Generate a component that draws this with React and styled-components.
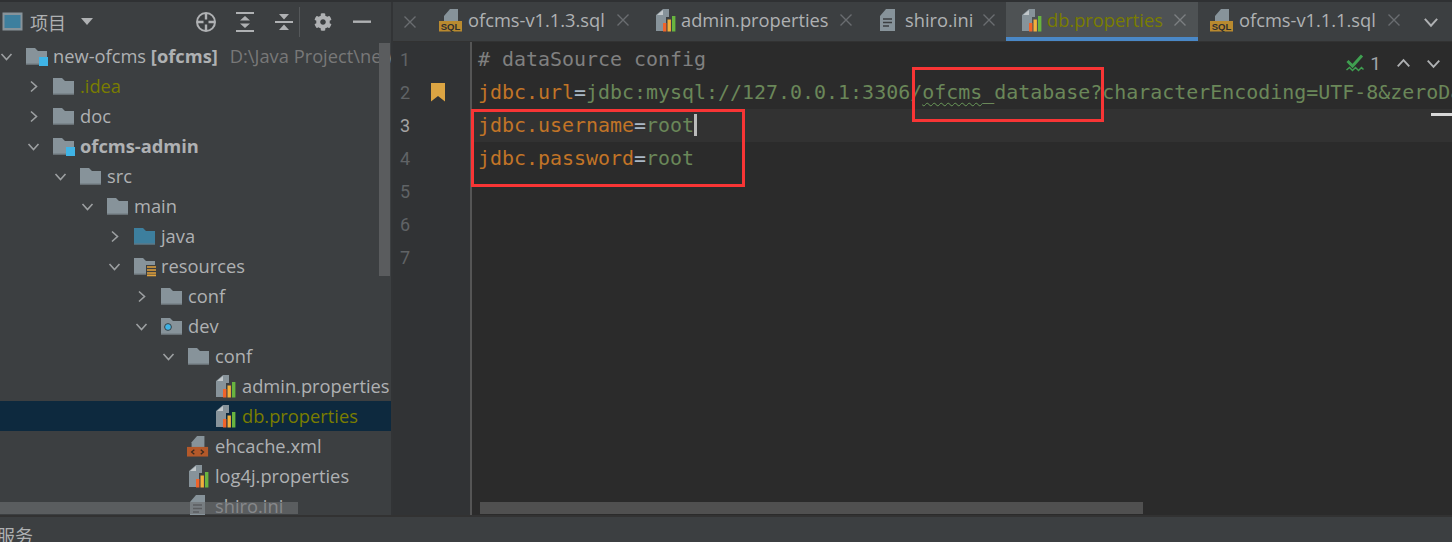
import React from "react";
import styled, { createGlobalStyle } from "styled-components";
import { FaCog } from "react-icons/fa";

const GlobalStyle = createGlobalStyle`
  html, body {
    margin: 0;
    padding: 0;
    background: #3c3f41;
    overflow: hidden;
  }
`;

const UI_FONT = `"Open Sans", "Noto Sans CJK SC", sans-serif`;
const CODE_FONT = `"DejaVu Sans Mono", monospace`;

const Page = styled.div`
  width: 1452px;
  height: 542px;
  display: flex;
  flex-direction: column;
  overflow: hidden;
  background: #3c3f41;
  font-family: ${UI_FONT};
  border-top: 2px solid #2f3133;
  box-sizing: border-box;
`;

const Workspace = styled.div`
  flex: 1;
  display: flex;
  min-height: 0;
`;

/* project panel */
const Sidebar = styled.aside`
  position: relative;
  width: 391px;
  flex: none;
  display: flex;
  flex-direction: column;
  overflow: hidden;
`;

const PanelHeader = styled.div`
  height: 39px;
  flex: none;
  display: flex;
  align-items: center;
  padding-left: 2px;
  color: #afb1b3;
`;

const PanelTitle = styled.span`
  font-size: 18px;
  margin-left: 7px;
  color: #afb1b3;
`;

const Dropdown = styled.span`
  width: 0;
  height: 0;
  margin-left: 15px;
  border-left: 6.5px solid transparent;
  border-right: 6.5px solid transparent;
  border-top: 7px solid #afb1b3;
`;

const PanelActions = styled.div`
  margin-left: auto;
  margin-right: 10px;
  display: flex;
  align-items: center;
`;

const ActionSlot = styled.span`
  width: 39px;
  height: 24px;
  display: flex;
  align-items: center;
  justify-content: center;
`;

const ActionDivider = styled.span`
  width: 1px;
  height: 30px;
  background: #55585a;
  margin: 0 3px 0 -4px;
`;

const Tree = styled.div`
  display: flex;
  flex-direction: column;
`;

const Row = styled.div`
  height: 30px;
  flex: none;
  display: flex;
  align-items: center;
  white-space: nowrap;
  padding-left: ${(p) => p.$depth * 27}px;
  background: ${(p) => (p.$selected ? "#0d293e" : "transparent")};
`;

const Toggle = styled.span`
  width: 13px;
  flex: none;
  margin-right: 12px;
  display: flex;
  align-items: center;
  justify-content: center;
`;

const NodeIcon = styled.span`
  width: 22px;
  height: 24px;
  flex: none;
  margin-right: 6px;
  display: flex;
  align-items: center;
  justify-content: center;
`;

const NodeLabel = styled.span`
  font-size: 18.3px;
  margin-bottom: 2px;
  font-weight: ${(p) => (p.$bold ? 700 : 400)};
  color: ${(p) => p.$color || "#afb1b3"};
`;

const NodeHint = styled.span`
  font-size: 18.3px;
  margin-bottom: 2px;
  color: #787878;
  margin-left: 12px;
`;

const TreeScrollV = styled.div`
  position: absolute;
  left: 379px;
  top: 41px;
  width: 11px;
  height: 233px;
  background: #5a5c5e;
`;

const TreeScrollH = styled.div`
  position: absolute;
  left: 0;
  bottom: 1px;
  width: 298px;
  height: 12px;
  background: rgba(110, 112, 114, 0.62);
`;

const PanelSplit = styled.div`
  width: 2px;
  flex: none;
  background: #323436;
`;

/* editor */
const EditorPane = styled.main`
  position: relative;
  flex: 1;
  min-width: 0;
  display: flex;
  flex-direction: column;
`;

const TabBar = styled.div`
  height: 39px;
  flex: none;
  display: flex;
  background: #3c3f41;
  border-bottom: 1px solid #323232;
  box-sizing: content-box;
`;

const TabStub = styled.div`
  width: 33px;
  flex: none;
  display: flex;
  align-items: center;
  justify-content: center;
  padding-right: 1px;
  margin-right: 9px;
`;

const Tab = styled.div`
  width: ${(p) => p.$width}px;
  flex: none;
  box-sizing: border-box;
  display: flex;
  align-items: center;
  padding-left: ${(p) => p.$pad}px;
  background: ${(p) => (p.$active ? "#4e5254" : "transparent")};
  border-bottom: 4px solid ${(p) => (p.$active ? "#4a88c7" : "transparent")};
`;

const TabLabel = styled.span`
  font-size: 18.3px;
  white-space: nowrap;
  margin-left: ${(p) => p.$gap}px;
  color: ${(p) => (p.$active ? "#7a7d00" : "#afb1b3")};
`;

const TabClose = styled.span`
  margin-left: auto;
  margin-right: ${(p) => p.$gap}px;
  display: flex;
`;

const TabMenu = styled.div`
  margin-left: 17px;
  display: flex;
  align-items: center;
`;

const EditorBody = styled.div`
  flex: 1;
  min-height: 0;
  display: flex;
  background: #2b2b2b;
`;

const Gutter = styled.div`
  width: 77px;
  flex: none;
  padding-top: 1px;
  background: #313335;
  border-right: 2px solid #555555;
`;

const GutterLine = styled.div`
  height: 33px;
  display: flex;
  align-items: center;
  justify-content: space-between;
  padding: 0 25px 0 7px;
  font-family: "Roboto", sans-serif;
  font-size: 18px;
  color: ${(p) => (p.$current ? "#a4a3a3" : "#606366")};
`;

const CodeArea = styled.div`
  flex: 1;
  min-width: 0;
  padding-top: 1px;
  overflow: hidden;
`;

const CodeLine = styled.div`
  height: 33px;
  box-sizing: border-box;
  padding-left: 6px;
  line-height: 33px;
  font-family: ${CODE_FONT};
  font-size: 19.95px;
  white-space: pre;
  background: ${(p) => (p.$current ? "#323232" : "transparent")};
`;

const Key = styled.span`
  color: #c27427;
`;

const Equals = styled.span`
  color: #a9b7c6;
`;

const Value = styled.span`
  color: #6a8759;
`;

const Typo = styled.span`
  text-decoration: underline wavy #6a9a59 1px;
  text-underline-offset: 3px;
`;

const Comment = styled.span`
  color: #808080;
`;

const Caret = styled.span`
  display: inline-block;
  width: 3px;
  height: 22px;
  margin-right: -3px;
  vertical-align: -4px;
  background: #bbbbbb;
`;

const Inspection = styled.div`
  position: absolute;
  top: 50px;
  right: 11px;
  display: flex;
  align-items: center;
  color: #a9b7c6;
  font-size: 19px;
`;

const InspectionCount = styled.span`
  margin: 0 15px 0 6px;
  font-family: "Roboto", sans-serif;
  color: #a0a4a8;
`;

const InspectionNext = styled.span`
  margin-left: 15px;
  display: flex;
`;

const StripeMark = styled.div`
  position: absolute;
  right: 0;
  top: 111px;
  width: 21px;
  height: 3px;
  background: #d8d8d8;
`;

const EditorScroll = styled.div`
  position: absolute;
  left: 87px;
  bottom: 1px;
  width: 663px;
  height: 12px;
  background: #505050;
`;

/* red marks drawn on top of the screenshot */
const Highlight = styled.div`
  position: absolute;
  box-sizing: border-box;
  border: 3px solid #f83535;
  left: ${(p) => p.$x}px;
  top: ${(p) => p.$y}px;
  width: ${(p) => p.$w}px;
  height: ${(p) => p.$h}px;
`;

const BottomBar = styled.footer`
  height: 27px;
  flex: none;
  box-sizing: border-box;
  border-top: 2px solid #323232;
  background: #3c3f41;
  overflow: hidden;
  padding-top: 7px;
`;

const BottomLabel = styled.span`
  display: block;
  margin-left: -3px;
  font-size: 18px;
  line-height: 24px;
  color: #afb1b3;
`;

/* icons */
const GREY = "#87939a";

const Chevron = ({ dir = "right", size = 13, color = "#9da0a2" }) => {
  const paths = {
    right: "M4 1.5 L9.5 6.5 L4 11.5",
    down: "M1.5 4 L6.5 9.5 L11.5 4",
    up: "M1.5 9 L6.5 3.5 L11.5 9",
  };
  return (
    <svg width={size} height={size} viewBox="0 0 13 13">
      <path d={paths[dir]} fill="none" stroke={color} strokeWidth="1.6" />
    </svg>
  );
};

const Folder = ({ color = GREY, children }) => (
  <svg width="22" height="20" viewBox="0 0 22 20" style={{ overflow: "visible" }}>
    <path d="M1 2 H10 L13 5 H22 V18.5 H1 Z" fill={color} />
    <path d="M1 17.5 H22 V18.5 H1 Z" fill="#6d777d" />
    {children}
  </svg>
);

const ModuleBadge = () => <rect x="14" y="11" width="9" height="9" fill="#3fb4e6" />;

const ResourceBadge = () => (
  <g>
    <rect x="13" y="9" width="10" height="11" fill="#3c3f41" />
    <path d="M14 11 H23 M14 14 H23 M14 17 H23 M14 19.4 H23" stroke="#e2a33d" strokeWidth="1.6" />
  </g>
);

const SourceDot = () => <circle cx="8" cy="11" r="3.4" fill="#3fb4e6" stroke="#3c3f41" strokeWidth="1" />;

const PropsFile = () => (
  <svg width="21" height="24" viewBox="0 0 21 24">
    <path d="M1 7 L8 1 H14 V9 H11 V23 H1 Z" fill={GREY} />
    <path d="M2 7 L8 2 V7 Z" fill="#c2c8cb" />
    <rect x="8" y="15" width="3.4" height="8.5" fill="#f0642a" />
    <rect x="12.5" y="11.5" width="3.4" height="12" fill="#f2b03c" />
    <rect x="17" y="8" width="3.4" height="15.5" fill="#68b43f" />
  </svg>
);

const TextFile = () => (
  <svg width="18" height="24" viewBox="0 0 18 24">
    <path d="M1 8 L7 1 H16 V23 H1 Z" fill={GREY} />
    <path d="M4 11 H13 M4 14.5 H13 M4 18 H10" stroke="#3c3f41" strokeWidth="1.5" />
  </svg>
);

const LabelFile = ({ color, children }) => (
  <svg width="24" height="24" viewBox="0 0 24 24">
    <path d="M5 8 L11 1 H19 V14 H5 Z" fill={GREY} />
    <rect x="0" y="13" width="23" height="10.5" fill={color} />
    {children}
  </svg>
);

const SqlFile = () => (
  <LabelFile color="#b98a2f">
    <text x="11.5" y="22" textAnchor="middle" fontFamily="Liberation Sans" fontWeight="700" fontSize="9.5" fill="#2f2f2f">
      SQL
    </text>
  </LabelFile>
);

const XmlFile = () => (
  <LabelFile color="#b4592a">
    <path d="M8 16 L5 18.5 L8 21 M15 16 L18 18.5 L15 21" fill="none" stroke="#3a2a20" strokeWidth="1.4" />
  </LabelFile>
);

const ProjectWindow = () => (
  <svg width="21" height="19" viewBox="0 0 21 19">
    <rect x="0.5" y="0.5" width="20" height="18" fill="#87939a" />
    <rect x="2.5" y="3" width="16" height="13" fill="#3d7f9e" />
  </svg>
);

const Locate = () => (
  <svg width="22" height="22" viewBox="0 0 22 22">
    <circle cx="11" cy="11" r="9" fill="none" stroke="#afb1b3" strokeWidth="2" />
    <path d="M11 2 V8.5 M11 13.5 V20 M2 11 H8.5 M13.5 11 H20" stroke="#afb1b3" strokeWidth="2.4" />
  </svg>
);

const ExpandAll = () => (
  <svg width="20" height="24" viewBox="0 0 20 24">
    <path d="M1 2 H19 V4 H1 Z M1 20 H19 V22 H1 Z" fill="#afb1b3" />
    <path d="M10 6 L15 10.5 H5 Z M10 18 L15 13.5 H5 Z" fill="#afb1b3" />
  </svg>
);

const CollapseAll = () => (
  <svg width="20" height="24" viewBox="0 0 20 24">
    <path d="M1 11 H19 V13 H1 Z" fill="#afb1b3" />
    <path d="M10 9.5 L15 4 H5 Z M10 14.5 L15 20 H5 Z" fill="#afb1b3" />
  </svg>
);

const Minimize = () => (
  <svg width="18" height="4" viewBox="0 0 18 4">
    <rect y="0.5" width="18" height="2.4" fill="#afb1b3" />
  </svg>
);

const CloseX = ({ color = "#6a6d70" }) => (
  <svg width="14" height="14" viewBox="0 0 14 14">
    <path d="M1.5 1.5 L12.5 12.5 M12.5 1.5 L1.5 12.5" stroke={color} strokeWidth="1.4" />
  </svg>
);

const CheckWavy = () => (
  <svg width="18" height="19" viewBox="0 0 18 19">
    <path d="M1.5 7 L6.5 12 L16 1.5" fill="none" stroke="#3f9f50" strokeWidth="3" />
    <path d="M0.5 16 L3.5 13.5 L6.5 16.5 L9.5 13.5 L12.5 16.5 L15.5 13.5 L17.5 15.5" fill="none" stroke="#3f9f50" strokeWidth="1.5" />
  </svg>
);

const Bookmark = () => (
  <svg width="14" height="19" viewBox="0 0 14 19">
    <path d="M0 0 H14 V18.5 L7 13 L0 18.5 Z" fill="#dca543" />
  </svg>
);

const treeNodes = [
  { depth: 0, open: true, icon: <Folder><ModuleBadge /></Folder>, label: "new-ofcms", project: true },
  { depth: 1, open: false, icon: <Folder />, label: ".idea", color: "#7a7d00" },
  { depth: 1, open: false, icon: <Folder />, label: "doc" },
  { depth: 1, open: true, icon: <Folder><ModuleBadge /></Folder>, label: "ofcms-admin", bold: true },
  { depth: 2, open: true, icon: <Folder />, label: "src" },
  { depth: 3, open: true, icon: <Folder />, label: "main" },
  { depth: 4, open: false, icon: <Folder color="#3d7f9e" />, label: "java" },
  { depth: 4, open: true, icon: <Folder><ResourceBadge /></Folder>, label: "resources" },
  { depth: 5, open: false, icon: <Folder />, label: "conf" },
  { depth: 5, open: true, icon: <Folder><SourceDot /></Folder>, label: "dev" },
  { depth: 6, open: true, icon: <Folder />, label: "conf" },
  { depth: 7, icon: <PropsFile />, label: "admin.properties" },
  { depth: 7, icon: <PropsFile />, label: "db.properties", color: "#7a7d00", selected: true },
  { depth: 6, icon: <XmlFile />, label: "ehcache.xml" },
  { depth: 6, icon: <PropsFile />, label: "log4j.properties" },
  { depth: 6, icon: <TextFile />, label: "shiro.ini" },
];

const tabs = [
  { icon: <SqlFile />, label: "ofcms-v1.1.3.sql", width: 215, pad: 3, labelGap: 5, gap: 21 },
  { icon: <PropsFile />, label: "admin.properties", width: 224, pad: 4, labelGap: 5, gap: 22 },
  { icon: <TextFile />, label: "shiro.ini", width: 131, pad: 4, labelGap: 8, gap: 10 },
  { icon: <PropsFile />, label: "db.properties", width: 192, pad: 15, labelGap: 5, gap: 11, active: true },
  { icon: <SqlFile />, label: "ofcms-v1.1.1.sql", width: 208, pad: 12, labelGap: 5, gap: 5 },
];

const App = () => (
  <>
    <GlobalStyle />
    <Page>
      <Workspace>
        <Sidebar>
          <PanelHeader>
            <ProjectWindow />
            <PanelTitle>项目</PanelTitle>
            <Dropdown />
            <PanelActions>
              <ActionSlot><Locate /></ActionSlot>
              <ActionSlot><ExpandAll /></ActionSlot>
              <ActionSlot><CollapseAll /></ActionSlot>
              <ActionDivider />
              <ActionSlot><FaCog size={18} color="#afb1b3" /></ActionSlot>
              <ActionSlot><Minimize /></ActionSlot>
            </PanelActions>
          </PanelHeader>
          <Tree>
            {treeNodes.map((node, i) => (
              <Row key={i} $depth={node.depth} $selected={node.selected}>
                <Toggle>
                  {node.open !== undefined && <Chevron dir={node.open ? "down" : "right"} />}
                </Toggle>
                <NodeIcon>{node.icon}</NodeIcon>
                {node.project ? (
                  <>
                    <NodeLabel>new-ofcms <b>[ofcms]</b></NodeLabel>
                    <NodeHint>D:\Java Project\new-ofcms</NodeHint>
                  </>
                ) : (
                  <NodeLabel $bold={node.bold} $color={node.color}>{node.label}</NodeLabel>
                )}
              </Row>
            ))}
          </Tree>
          <TreeScrollV />
          <TreeScrollH />
        </Sidebar>
        <PanelSplit />
        <EditorPane>
          <TabBar>
            <TabStub><CloseX /></TabStub>
            {tabs.map((tab) => (
              <Tab key={tab.label} $width={tab.width} $pad={tab.pad} $active={tab.active}>
                {tab.icon}
                <TabLabel $active={tab.active} $gap={tab.labelGap}>{tab.label}</TabLabel>
                <TabClose $gap={tab.gap}><CloseX color={tab.active ? "#7c7f82" : "#6a6d70"} /></TabClose>
              </Tab>
            ))}
            <TabMenu><Chevron dir="down" size={16} color="#afb1b3" /></TabMenu>
          </TabBar>
          <EditorBody>
            <Gutter>
              <GutterLine>1</GutterLine>
              <GutterLine>2<Bookmark /></GutterLine>
              <GutterLine $current>3</GutterLine>
              <GutterLine>4</GutterLine>
              <GutterLine>5</GutterLine>
              <GutterLine>6</GutterLine>
              <GutterLine>7</GutterLine>
            </Gutter>
            <CodeArea>
              <CodeLine><Comment># dataSource config</Comment></CodeLine>
              <CodeLine>
                <Key>jdbc.url</Key><Equals>=</Equals>
                <Value>jdbc:mysql://127.0.0.1:3306/<Typo>ofcms</Typo>_database?characterEncoding=UTF-8&amp;zeroDateTimeBehavior=convertToNull</Value>
              </CodeLine>
              <CodeLine $current>
                <Key>jdbc.username</Key><Equals>=</Equals><Value>root</Value><Caret />
              </CodeLine>
              <CodeLine>
                <Key>jdbc.password</Key><Equals>=</Equals><Value>root</Value>
              </CodeLine>
            </CodeArea>
          </EditorBody>
          <Inspection>
            <CheckWavy />
            <InspectionCount>1</InspectionCount>
            <Chevron dir="up" size={15} color="#afb1b3" />
            <InspectionNext><Chevron dir="down" size={15} color="#afb1b3" /></InspectionNext>
          </Inspection>
          <StripeMark />
          <EditorScroll />
          <Highlight $x={519} $y={65} $w={192} $h={55} />
          <Highlight $x={78} $y={107} $w={274} $h={78} />
        </EditorPane>
      </Workspace>
      <BottomBar>
        <BottomLabel>服务</BottomLabel>
      </BottomBar>
    </Page>
  </>
);

export default App;
